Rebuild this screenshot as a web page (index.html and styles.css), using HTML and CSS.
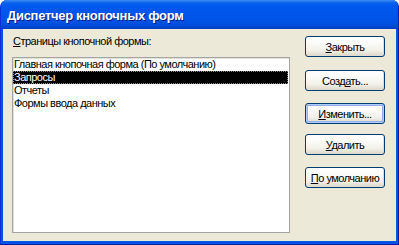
FILE: index.html
```html
<!DOCTYPE html>
<html lang="ru">
<head>
<meta charset="utf-8">
<title>Диспетчер кнопочных форм</title>
<link rel="stylesheet" href="styles.css">
</head>
<body>
<div class="window">
  <div class="titlebar"><span class="title">Диспетчер кнопочных форм</span></div>
  <div class="client">
    <div class="left">
      <div class="label"><u>С</u>траницы кнопочной формы:</div>
      <div class="list">
        <div class="item">Главная кнопочная форма (По умолчанию)</div>
        <div class="item selected">Запросы</div>
        <div class="item">Отчеты</div>
        <div class="item">Формы ввода данных</div>
      </div>
    </div>
    <div class="buttons">
      <button class="btn b1"><u>З</u>акрыть</button>
      <button class="btn">Созд<u>а</u>ть...</button>
      <button class="btn focused"><u>И</u>зменить...</button>
      <button class="btn b4"><u>У</u>далить</button>
      <button class="btn"><u>П</u>о умолчанию</button>
    </div>
  </div>
</div>
</body>
</html>
```
FILE: styles.css
```css
html, body {
  margin: 0;
  padding: 0;
  background: #ffffff;
}
body {
  width: 399px;
  height: 245px;
  overflow: hidden;
  font-family: "Liberation Sans", Arial, sans-serif;
  font-size: 11px;
  letter-spacing: -0.5px;
}
.window {
  width: 399px;
  height: 245px;
  display: flex;
  flex-direction: column;
  background: #0055e5;
  border-radius: 7px 7px 0 0;
  overflow: hidden;
  box-sizing: border-box;
  border-left: 1px solid #0831d9;
  border-right: 1px solid #001ea0;
  border-bottom: 1px solid #001ea0;
}
.titlebar {
  height: 29px;
  flex: none;
  display: flex;
  align-items: center;
  padding-left: 6px;
  background: linear-gradient(to bottom,
    #3f8cf3 0px, #2a7cf4 1px, #0a62ea 3px, #0058ee 6px,
    #0055eb 14px, #0052e4 22px, #004bd8 26px, #0042c7 28px, #003cbf 29px);
}
.title {
  color: #ffffff;
  font-family: "Liberation Sans", Arial, sans-serif;
  font-weight: bold;
  font-size: 13px;
  letter-spacing: -0.3px;
  text-shadow: 1px 1px 0 #0a1883;
  padding-top: 1px;
}
.client {
  flex: 1;
  margin: 0 2px 3px 2px;
  background: #ece9d8;
  display: grid;
  grid-template-columns: 278px 80px;
  column-gap: 15px;
  padding: 0 11px 8px 9px;
  box-sizing: border-box;
}
.left {
  display: flex;
  flex-direction: column;
  padding-top: 6px;
}
.label {
  line-height: 13px;
  height: 13px;
  margin-bottom: 9px;
  padding-left: 1px;
  color: #000;
}
.list {
  flex: 1;
  background: #ffffff;
  border: 1px solid #a4a4a4;
  box-shadow: inset 1px 1px 0 #e4e2d8;
  padding: 0;
}
.item {
  height: 13px;
  line-height: 13px;
  padding-left: 1px;
  color: #000;
  white-space: nowrap;
}
.item.selected {
  background: #000000;
  color: #ffffff;
  outline: 1px dotted #8a8a8a;
  outline-offset: -1px;
  margin-right: 1px;
}
.buttons {
  display: flex;
  flex-direction: column;
  gap: 12px;
  padding-top: 7px;
}
.btn.b1 {
  margin-bottom: 1px;
}
.btn.b4 {
  margin-top: -2px;
}
.btn {
  width: 80px;
  height: 21px;
  padding: 0;
  margin: 0;
  font-family: "Liberation Sans", Arial, sans-serif;
  font-size: 11px;
  letter-spacing: -0.5px;
  color: #000;
  border: 1px solid #003c74;
  border-radius: 3px;
  background: linear-gradient(to bottom, #ffffff 0%, #fbfbf9 30%, #f2f1ea 70%, #e3e0d4 90%, #d6d0c5 100%);
  box-shadow: inset -1px -1px 0 #e0ddd0;
}
.btn.focused {
  box-shadow: inset 0 0 0 1px #b2cdf6, inset 0 0 0 2px #8fb0ec;
}
u {
  text-decoration: underline;
  text-underline-offset: 1px;
}
```
